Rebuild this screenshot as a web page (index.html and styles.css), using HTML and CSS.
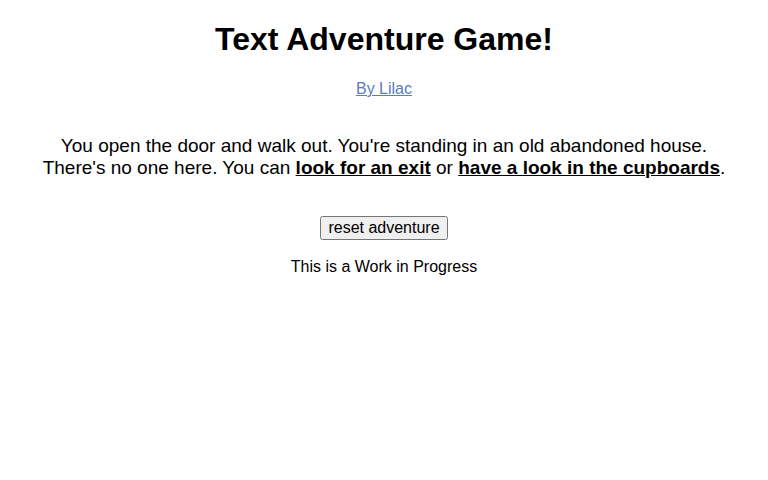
FILE: index.html
```html
<!DOCTYPE html>
<html lang="en">
<head>
  <meta charset="UTF-8">
  <meta name="viewport" content="width=device-width, initial-scale=1.0">
  <title>Text Adventure Game!</title>
  <link rel="stylesheet" href="styles.css">
</head>
<body>
  <h1>Text Adventure Game!</h1>
  <a class="author" href="#">By Lilac</a>

  <p class="story">
    You open the door and walk out. You're standing in an old abandoned house.
    There's no one here. You can <a href="#">look for an exit</a> or <a href="#">have a look in the cupboards</a>.
  </p>

  <button class="reset">reset adventure</button>
  <p class="note">This is a Work in Progress</p>
</body>
</html>
```

FILE: styles.css
```css
body {
  font-family: 'Liberation Sans', Arial, sans-serif;
  text-align: center;
  margin: 0;
  padding: 8px;
  color: #000;
}
h1 {
  font-size: 32px;
  margin: 13px 0 22px;
}
.author {
  color: #5a7dbd;
  font-size: 16px;
}
.story {
  font-size: 19px;
  line-height: 22px;
  max-width: 700px;
  margin: 37px auto 37px;
}
.story a {
  color: #000;
  font-weight: bold;
}
.reset {
  font-family: 'Liberation Sans', Arial, sans-serif;
  font-size: 16px;
  padding: 1px 6px;
}
.note {
  font-size: 16px;
  margin-top: 18px;
}
```
